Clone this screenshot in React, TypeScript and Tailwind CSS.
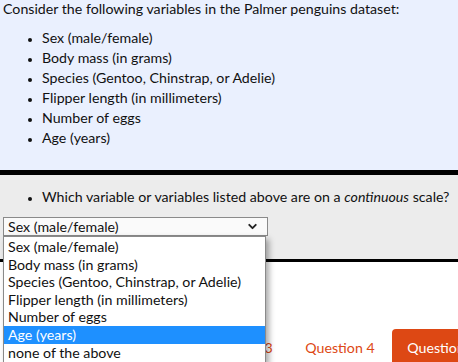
import { ChevronDown } from 'lucide-react'

const variables = [
  'Sex (male/female)',
  'Body mass (in grams)',
  'Species (Gentoo, Chinstrap, or Adelie)',
  'Flipper length (in millimeters)',
  'Number of eggs',
  'Age (years)',
]

const options = [...variables, 'none of the above']

export default function App() {
  return (
    <div className="relative w-[458px] h-[362px] overflow-hidden bg-white text-[14.2px] text-[#111] font-['Lato',sans-serif]">
      {/* intro */}
      <div className="h-[170px] bg-[#eaf0fe] px-[3px]">
        <p className="leading-[18px]">Consider the following variables in the Palmer penguins dataset:</p>
        <ul className="mt-[10px] list-disc pl-[39px] leading-[20px] marker:text-[11px]">
          {variables.map((v) => (
            <li key={v}>{v}</li>
          ))}
        </ul>
      </div>

      {/* question */}
      <div className="h-[92px] border-y-black border-t-[5px] border-b-[3px] bg-[#ececec] px-[3px] pt-[12px]">
        <ul className="list-disc pl-[39px] leading-[20px] marker:text-[11px]">
          <li>
            Which variable or variables listed above are on a <em>continuous</em> scale?
          </li>
        </ul>
        <div className="mt-[10px] flex h-[19px] w-[265px] items-center justify-between border border-[#8a8a8a] bg-[#fafafa] pl-[4px] pr-[8px] leading-[17px]">
          <span>Sex (male/female)</span>
          <ChevronDown size={13} strokeWidth={3.5} className="text-[#222]" />
        </div>
      </div>

      {/* tabs */}
      <div className="flex pt-[67px] ml-[188px] gap-[2px]">
        {[3, 4, 5].map((n) => (
          <div
            key={n}
            className={
              n === 5
                ? 'w-[100px] shrink-0 h-[33px] rounded-tl-[4px] bg-[#dd4814] text-white text-center leading-[33px] pt-[2px]'
                : 'w-[100px] shrink-0 h-[33px] text-[#dd4814] text-center leading-[33px] pt-[2px]'
            }
          >
            Question {n}
          </div>
        ))}
      </div>

      {/* open select menu */}
      <div className="absolute left-[3px] top-[236px] w-[263px] border border-[#8a8a8a] bg-white py-[1px] shadow-[3px_3px_6px_rgba(0,0,0,0.35)]">
        {options.map((o) => (
          <div
            key={o}
            className={
              o === 'Age (years)'
                ? 'h-[17.6px] leading-[17.6px] pl-[4px] bg-[#1e90ff] text-white'
                : 'h-[17.6px] leading-[17.6px] pl-[4px]'
            }
          >
            {o}
          </div>
        ))}
      </div>
    </div>
  )
}
